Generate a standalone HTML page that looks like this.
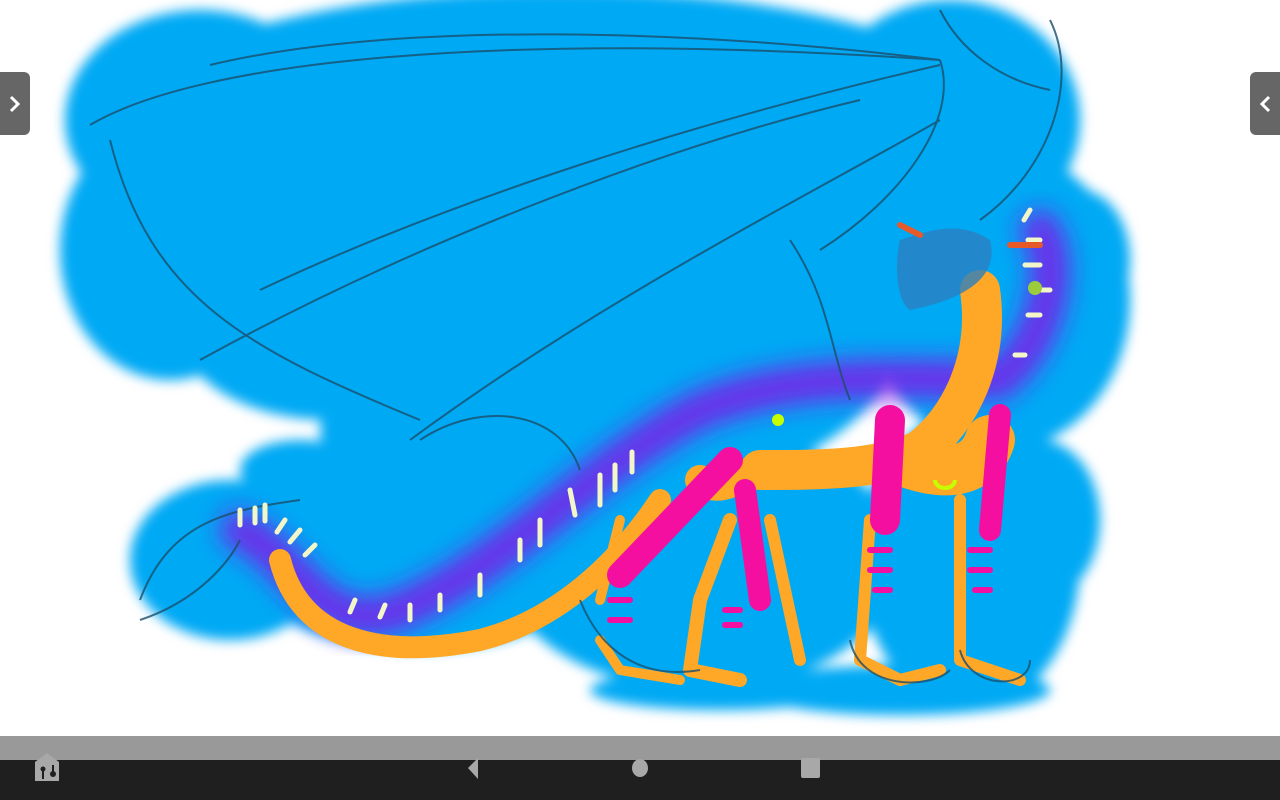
<!DOCTYPE html>
<html><head><meta charset="utf-8"><style>
html,body{margin:0;padding:0;width:1280px;height:800px;overflow:hidden;background:#fff;font-family:"Liberation Sans",sans-serif}
svg{position:absolute;left:0;top:0}
.tab{position:absolute;top:72px;width:30px;height:63px;background:#666;border-radius:6px}
</style></head><body>
<svg width="1280" height="800" viewBox="0 0 1280 800">
<defs><filter id="b" x="-10%" y="-10%" width="120%" height="120%"><feGaussianBlur stdDeviation="6"/></filter>
<filter id="b2"><feGaussianBlur stdDeviation="12"/></filter></defs>
<g fill="#03a9f4" filter="url(#b)">
<ellipse cx="200" cy="120" rx="135" ry="110"/>
<ellipse cx="560" cy="150" rx="480" ry="160"/>
<ellipse cx="170" cy="250" rx="110" ry="130"/>
<ellipse cx="330" cy="330" rx="150" ry="90"/>
<ellipse cx="600" cy="330" rx="300" ry="170"/>
<ellipse cx="950" cy="120" rx="130" ry="120"/>
<ellipse cx="1000" cy="300" rx="130" ry="150"/>
<ellipse cx="1080" cy="260" rx="50" ry="70"/>
<ellipse cx="230" cy="560" rx="100" ry="80"/>
<ellipse cx="420" cy="560" rx="180" ry="90"/>
<ellipse cx="700" cy="560" rx="200" ry="130"/>
<ellipse cx="970" cy="560" rx="110" ry="150"/>
<ellipse cx="1040" cy="520" rx="60" ry="80"/>
<ellipse cx="480" cy="430" rx="160" ry="80"/>
<ellipse cx="300" cy="470" rx="60" ry="30"/>
<ellipse cx="900" cy="690" rx="150" ry="25"/>
<ellipse cx="720" cy="690" rx="130" ry="20"/>
</g>
<g fill="none" stroke="#7b1fe8" stroke-width="40" stroke-linecap="round" opacity=".85" filter="url(#b2)">
<path d="M240 530 C300 560 320 640 400 610 C500 570 600 460 700 410 C800 370 900 380 1000 380"/>
<path d="M1040 230 C1060 260 1050 330 1010 370"/>
</g>
<g fill="none" stroke="#ffa726" stroke-linecap="round" stroke-linejoin="round">
<path d="M280 560 C300 640 380 660 480 640 C560 620 620 560 660 500" stroke-width="22"/>
<path d="M760 470 C820 470 880 470 920 450 C960 420 990 360 980 290" stroke-width="40"/>
<path d="M900 460 C950 480 980 470 990 440" stroke-width="50"/>
<path d="M700 480 C730 500 750 460 770 470" stroke-width="30"/>
<path d="M730 520 L700 600 L690 670 L740 680" stroke-width="14"/>
<path d="M770 520 L800 660" stroke-width="12"/>
<path d="M870 520 L860 660 L900 680 L940 670" stroke-width="12"/>
<path d="M960 500 L960 660 L1020 680" stroke-width="12"/>
<path d="M600 640 L620 670 L680 680" stroke-width="10"/>
<path d="M620 520 L600 600" stroke-width="10"/>
</g>
<g fill="none" stroke="#f50fa0" stroke-linecap="round">
<path d="M620 575 L730 460" stroke-width="26"/>
<path d="M745 490 L760 600" stroke-width="22"/>
<path d="M890 420 L885 520" stroke-width="30"/>
<path d="M1000 415 L990 530" stroke-width="22"/>
<path d="M870 550 h20 M870 570 h20 M875 590 h15 M970 550 h20 M970 570 h20 M975 590 h15 M610 600 h20 M610 620 h20 M725 610 h15 M725 625 h15" stroke-width="6"/>
</g>
<path d="M900 240 C930 230 960 220 990 240 C1000 280 960 300 910 310 C895 300 895 260 900 240Z" fill="#2a7fc0" opacity=".8"/>
<g fill="none" stroke="#1b4f6b" stroke-width="2" opacity=".8">
<path d="M90 125 C200 60 500 30 940 60"/><path d="M210 65 C400 20 700 30 940 60"/>
<path d="M260 290 C450 200 700 120 940 65"/><path d="M200 360 C400 250 650 150 860 100"/>
<path d="M410 440 C600 300 800 200 940 120"/><path d="M110 140 C150 300 250 350 420 420"/>
<path d="M940 60 C960 120 900 200 820 250"/><path d="M1050 20 C1080 80 1050 170 980 220"/>
<path d="M940 10 C960 50 1000 80 1050 90"/><path d="M790 240 C830 300 830 350 850 400"/>
<path d="M420 440 C480 400 560 410 580 470"/>
<path d="M140 600 C170 520 230 510 300 500"/><path d="M140 620 C200 600 230 560 240 540"/>
<path d="M580 600 C600 650 640 680 700 670"/><path d="M850 640 C860 690 930 690 950 670"/>
<path d="M960 650 C970 690 1030 690 1030 660"/>
</g>
<g stroke="#f3f7c8" stroke-width="5" stroke-linecap="round">
<path d="M240 510v15M255 508v15M265 505v16M285 520l-8 12M300 530l-10 12M315 545l-10 10M355 600l-5 12M385 605l-5 12M410 605v15M440 595v15M480 575v20M520 540v20M540 520v25M570 490l5 25M600 475v30M615 465v25M632 452v20M1030 210l-6 10M1040 240h-12M1040 265h-15M1050 290h-18M1040 315h-12M1025 355h-10"/>
</g>
<path d="M935 480a10 8 0 1 0 20 0" fill="none" stroke="#c6ff00" stroke-width="4"/>
<circle cx="778" cy="420" r="6" fill="#c6ff00"/><circle cx="1035" cy="288" r="7" fill="#9ccc3c"/>
<path d="M900 225 l20 10M1010 245 l30 0" stroke="#e65a2a" stroke-width="6" stroke-linecap="round"/>
<rect x="0" y="736" width="1280" height="24" fill="#999"/>
<rect x="0" y="760" width="1280" height="40" fill="#1f1f1f"/>
<path d="M35 762 L47 753 L59 762 V781 H35Z" fill="#a8a8a8"/>
<circle cx="43" cy="769" r="2.5" fill="#1f1f1f"/><rect x="42" y="769" width="2" height="10" fill="#1f1f1f"/>
<circle cx="53" cy="774" r="3" fill="#1f1f1f"/><rect x="52" y="765" width="2" height="8" fill="#1f1f1f"/>
<path d="M478 758 L478 779 L468 768Z" fill="#a8a8a8"/>
<ellipse cx="640" cy="768" rx="8" ry="9" fill="#a8a8a8"/>
<rect x="801" y="758" width="19" height="20" rx="2" fill="#a8a8a8"/>
</svg>
<div class="tab" style="left:0;border-radius:0 6px 6px 0"><svg width="30" height="63"><path d="M11 25 L18 32 L11 39" fill="none" stroke="#fff" stroke-width="3"/></svg></div>
<div class="tab" style="left:1250px;border-radius:6px 0 0 6px"><svg width="30" height="63"><path d="M19 25 L12 32 L19 39" fill="none" stroke="#fff" stroke-width="3"/></svg></div>
</body></html>
